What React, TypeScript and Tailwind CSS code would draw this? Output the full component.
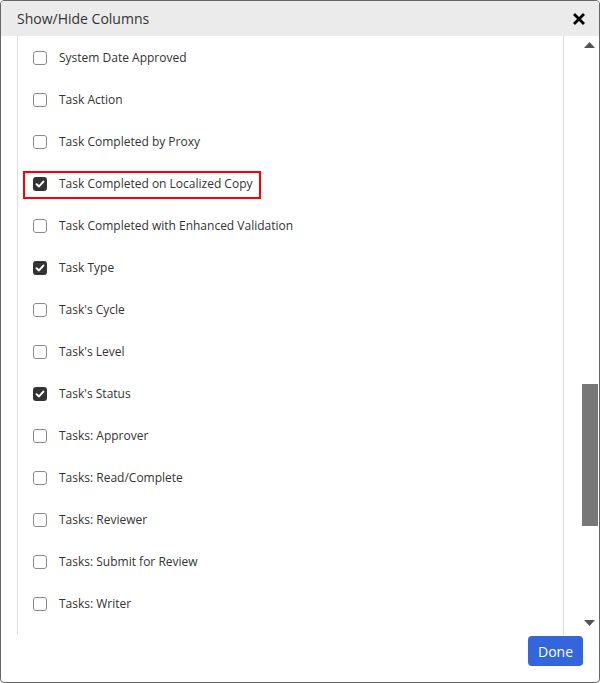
import React, { useState } from "react";

interface ColumnOption {
  label: string;
  checked: boolean;
  highlight?: boolean;
}

const initialColumns: ColumnOption[] = [
  { label: "System Date Approved", checked: false },
  { label: "Task Action", checked: false },
  { label: "Task Completed by Proxy", checked: false },
  { label: "Task Completed on Localized Copy", checked: true, highlight: true },
  { label: "Task Completed with Enhanced Validation", checked: false },
  { label: "Task Type", checked: true },
  { label: "Task's Cycle", checked: false },
  { label: "Task's Level", checked: false },
  { label: "Task's Status", checked: true },
  { label: "Tasks: Approver", checked: false },
  { label: "Tasks: Read/Complete", checked: false },
  { label: "Tasks: Reviewer", checked: false },
  { label: "Tasks: Submit for Review", checked: false },
  { label: "Tasks: Writer", checked: false },
];

const CheckBox: React.FC<{ checked: boolean }> = ({ checked }) => {
  if (checked) {
    return (
      <span className="w-[14px] h-[14px] rounded-[3px] bg-[#333] flex items-center justify-center shrink-0">
        <svg width="10" height="10" viewBox="0 0 10 10">
          <path d="M1.6 5.2 L4 7.4 L8.4 2.6" fill="none" stroke="#fff" strokeWidth="2" strokeLinecap="round" strokeLinejoin="round" />
        </svg>
      </span>
    );
  }
  return <span className="w-[14px] h-[14px] rounded-[3px] border border-[#8a8a8a] bg-white shrink-0" />;
};

const App: React.FC = () => {
  const [columns, setColumns] = useState<ColumnOption[]>(initialColumns);

  const toggle = (idx: number) => {
    setColumns((prev) => prev.map((c, i) => (i === idx ? { ...c, checked: !c.checked } : c)));
  };

  return (
    <div className="w-[600px] h-[683px] bg-white" style={{ fontFamily: '"Open Sans", sans-serif' }}>
      <div className="w-full h-full border border-[#666] rounded-[4px] overflow-hidden flex flex-col text-[#333]">
        {/* header */}
        <div className="h-[35px] bg-[#ebebeb] flex items-center justify-between pl-[16px] pr-[14px] shrink-0">
          <span className="text-[14px]">Show/Hide Columns</span>
          <svg width="12" height="12" viewBox="0 0 12 12">
            <path d="M2 2 L10 10 M10 2 L2 10" stroke="#000" strokeWidth="2.8" strokeLinecap="square" />
          </svg>
        </div>

        {/* body */}
        <div className="flex h-[599px] shrink-0">
          <div className="pl-[16px] flex-1">
            <div className="w-[547px] h-full border-l border-r border-[#ddd] pt-[1px]">
              {columns.map((col, i) => (
                <div
                  key={col.label}
                  onClick={() => toggle(i)}
                  className="relative h-[42px] flex items-center pl-[15px] gap-[12px] text-[12px] cursor-pointer"
                >
                  {col.highlight && (
                    <span className="absolute left-[5px] top-[8px] w-[238px] h-[28px] border-2 border-[#f00] pointer-events-none" />
                  )}
                  <CheckBox checked={col.checked} />
                  <span>{col.label}</span>
                </div>
              ))}
            </div>
          </div>

          {/* scrollbar */}
          <div className="w-[35px] flex flex-col items-center pl-[16px] pt-[6px]">
            <svg width="11" height="6" viewBox="0 0 11 6">
              <path d="M0 6 L5.5 0 L11 6 Z" fill="#555" />
            </svg>
            <div className="mt-[336px] w-[16px] h-[142px] bg-[#777]" />
            <div className="mt-[94px]">
              <svg width="11" height="6" viewBox="0 0 11 6">
                <path d="M0 0 L5.5 6 L11 0 Z" fill="#555" />
              </svg>
            </div>
          </div>
        </div>

        {/* footer */}
        <div className="flex justify-end pr-[16px] pt-[1px]">
          <button className="h-[30px] px-[10px] rounded-[4px] bg-[#3366dd] text-white text-[14px]">Done</button>
        </div>
      </div>
    </div>
  );
};

export default App;
